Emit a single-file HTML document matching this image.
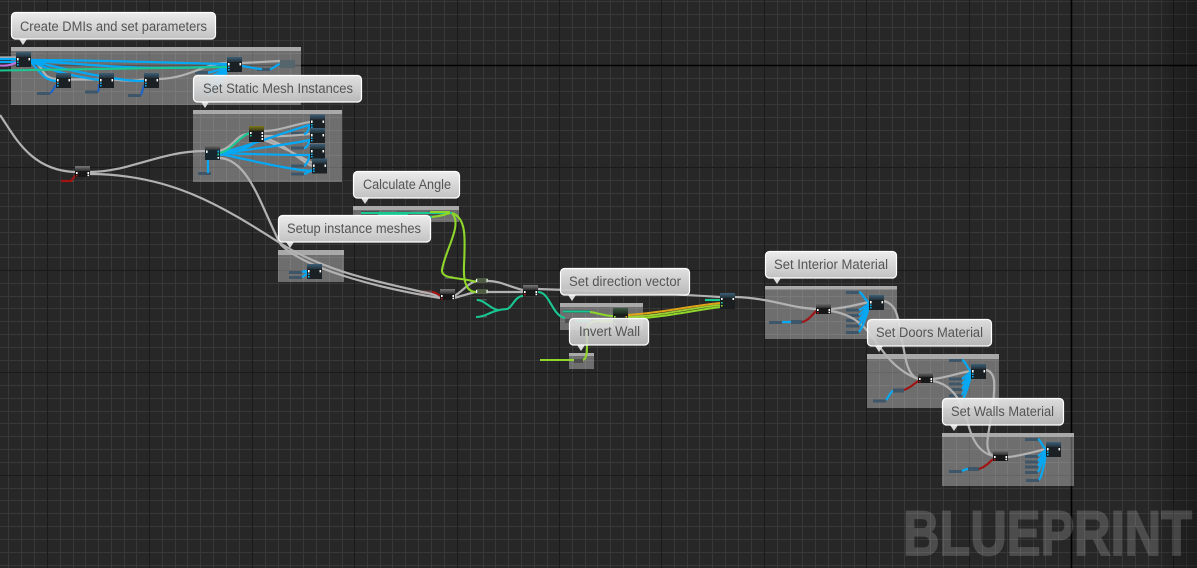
<!DOCTYPE html>
<html><head><meta charset="utf-8"><style>
html,body{margin:0;padding:0;background:#272727;overflow:hidden}
svg{display:block;width:1197px;height:568px}
text{font-family:"Liberation Sans",sans-serif}
.g{fill:#fff;fill-opacity:.33}.t{fill:#a9a9a9}
.wh{stroke:#b2b2b2;stroke-width:2.2;fill:none}
.bl{stroke:#06a8f4;stroke-width:2.2;fill:none}
.db{stroke:#1e63c8;stroke-width:2.1;fill:none}
.te{stroke:#19c792;stroke-width:2.1;fill:none}
.gr{stroke:#8fd62a;stroke-width:2.1;fill:none}
.re{stroke:#a01414;stroke-width:2.2;fill:none}
.v{fill:#3f5668}
.b{fill:url(#bub);stroke:#fff;stroke-width:1.2}
.tl{fill:#dcdcdc}
.c{fill:#545454;font-size:13.5px}
</style></head><body>
<svg xmlns="http://www.w3.org/2000/svg" width="1197" height="568" viewBox="0 0 1197 568">
<defs>
<linearGradient id="bub" x1="0" y1="0" x2="0" y2="1"><stop offset="0" stop-color="#ececec"/><stop offset="1" stop-color="#c2c2c2"/></linearGradient>
<linearGradient id="hb" x1="0" y1="0" x2="0" y2="1"><stop offset="0" stop-color="#3d6078"/><stop offset="1" stop-color="#223038"/></linearGradient>
<linearGradient id="hg" x1="0" y1="0" x2="0" y2="1"><stop offset="0" stop-color="#7a7a7a"/><stop offset="1" stop-color="#2e2e2e"/></linearGradient>
<linearGradient id="hy" x1="0" y1="0" x2="0" y2="1"><stop offset="0" stop-color="#7d7a1c"/><stop offset="1" stop-color="#34341a"/></linearGradient>
<linearGradient id="hd" x1="0" y1="0" x2="0" y2="1"><stop offset="0" stop-color="#3d5a42"/><stop offset="1" stop-color="#1f2a20"/></linearGradient>
<linearGradient id="vig" x1="0" y1="0" x2="1" y2="0"><stop offset="0" stop-color="#000" stop-opacity="0"/><stop offset="1" stop-color="#000" stop-opacity=".3"/></linearGradient>
<g id="nb"><rect width="15" height="15" fill="#1a2023"/><rect width="15" height="5" fill="url(#hb)"/><rect x="1" y="6" width="1.600" height="2.400" fill="#fff"/><rect x="12.500" y="6" width="1.600" height="2.400" fill="#fff"/><rect x="1" y="9.500" width="1.600" height="1.500" fill="#10b0f0"/><rect x="1" y="12" width="1.600" height="1.500" fill="#10b0f0"/></g>
<g id="ng"><rect width="15" height="11" fill="#181818"/><rect width="15" height="5" fill="url(#hg)"/><rect x="1" y="6" width="1.600" height="2" fill="#fff"/><rect x="12.500" y="6" width="1.600" height="2" fill="#fff"/><rect x="12.500" y="8.600" width="1.600" height="1.600" fill="#fff"/><rect x="1" y="9" width="1.600" height="1.400" fill="#b01818"/></g>
<g id="nt"><rect width="15" height="15" fill="#17262e"/><rect width="15" height="5" fill="url(#hg)"/><rect x="1" y="5.500" width="1.600" height="2.400" fill="#fff"/><rect x="12.500" y="5.500" width="1.600" height="2" fill="#10b0f0"/><rect x="12.500" y="8.500" width="1.600" height="2" fill="#20d0a0"/><rect x="12.500" y="12" width="1.600" height="1.600" fill="#fff"/></g>
</defs>
<rect width="1197" height="568" fill="#272727"/>
<path stroke="#383838" stroke-width="1" fill="none" d="M8.500 0V568M21.500 0V568M34.500 0V568M60.500 0V568M73.500 0V568M85.500 0V568M98.500 0V568M111.500 0V568M124.500 0V568M136.500 0V568M162.500 0V568M175.500 0V568M187.500 0V568M200.500 0V568M213.500 0V568M226.500 0V568M239.500 0V568M265.500 0V568M278.500 0V568M290.500 0V568M303.500 0V568M316.500 0V568M329.500 0V568M342.500 0V568M367.500 0V568M380.500 0V568M392.500 0V568M405.500 0V568M418.500 0V568M431.500 0V568M444.500 0V568M470.500 0V568M483.500 0V568M495.500 0V568M508.500 0V568M521.500 0V568M534.500 0V568M547.500 0V568M572.500 0V568M585.500 0V568M597.500 0V568M610.500 0V568M623.500 0V568M636.500 0V568M649.500 0V568M674.500 0V568M687.500 0V568M699.500 0V568M712.500 0V568M725.500 0V568M738.500 0V568M751.500 0V568M777.500 0V568M790.500 0V568M802.500 0V568M815.500 0V568M828.500 0V568M841.500 0V568M854.500 0V568M879.500 0V568M892.500 0V568M904.500 0V568M917.500 0V568M930.500 0V568M943.500 0V568M956.500 0V568M982.500 0V568M995.500 0V568M1007.500 0V568M1020.500 0V568M1033.500 0V568M1045.500 0V568M1058.500 0V568M1084.500 0V568M1097.500 0V568M1109.500 0V568M1122.500 0V568M1135.500 0V568M1148.500 0V568M1161.500 0V568M1186.500 0V568M0 1.500H1197M0 14.500H1197M0 27.500H1197M0 40.500H1197M0 53.500H1197M0 78.500H1197M0 91.500H1197M0 104.500H1197M0 117.500H1197M0 130.500H1197M0 142.500H1197M0 155.500H1197M0 180.500H1197M0 193.500H1197M0 206.500H1197M0 219.500H1197M0 232.500H1197M0 244.500H1197M0 257.500H1197M0 283.500H1197M0 296.500H1197M0 308.500H1197M0 321.500H1197M0 334.500H1197M0 347.500H1197M0 360.500H1197M0 385.500H1197M0 398.500H1197M0 411.500H1197M0 423.500H1197M0 436.500H1197M0 449.500H1197M0 462.500H1197M0 488.500H1197M0 500.500H1197M0 513.500H1197M0 526.500H1197M0 539.500H1197M0 552.500H1197M0 565.500H1197"/>
<path stroke="#1a1a1a" stroke-width="1" fill="none" d="M47.500 0V568M149.500 0V568M252.500 0V568M354.500 0V568M457.500 0V568M559.500 0V568M661.500 0V568M764.500 0V568M866.500 0V568M969.500 0V568M1173.500 0V568M0 167.500H1197M0 270.500H1197M0 372.500H1197M0 475.500H1197"/>
<path stroke="#000" stroke-width="1.600" fill="none" d="M1071.500 0V568M0 65.500H1197"/>
<rect x="1150" width="47" height="568" fill="url(#vig)"/>
<text x="903" y="555" font-size="63" font-weight="700" fill="#fff" stroke="#fff" stroke-width="1.800" opacity=".17" textLength="289" lengthAdjust="spacingAndGlyphs">BLUEPRINT</text>

<!-- comment regions -->
<rect class="g" x="11" y="47" width="290" height="58"/><rect class="t" x="11" y="47" width="290" height="4"/>
<rect class="g" x="193" y="110" width="149" height="72"/><rect class="t" x="193" y="110" width="149" height="4"/>
<rect class="g" x="353" y="206" width="106" height="16"/><rect class="t" x="353" y="206" width="106" height="4"/>
<rect class="g" x="278" y="250" width="66" height="32"/><rect class="t" x="278" y="250" width="66" height="5"/>
<rect class="g" x="560" y="303" width="83" height="27"/><rect class="t" x="560" y="303" width="83" height="4"/>
<rect class="g" x="569" y="353" width="25" height="16"/><rect class="t" x="569" y="353" width="25" height="3"/>
<rect class="g" x="765" y="286" width="132" height="53"/><rect class="t" x="765" y="286" width="132" height="3.500"/>
<rect class="g" x="867" y="354" width="132" height="54"/><rect class="t" x="867" y="354" width="132" height="5"/>
<rect class="g" x="942" y="433" width="132" height="53"/><rect class="t" x="942" y="433" width="132" height="4"/>

<!-- variable stubs -->
<g class="v">
<rect x="37" y="92" width="13" height="3"/><rect x="85" y="90.500" width="13" height="3"/><rect x="128" y="94" width="13" height="3"/>
<rect x="195" y="71" width="13" height="3"/><rect x="195" y="76.500" width="13" height="3"/><rect x="195" y="81" width="13" height="3"/><rect x="195" y="86.500" width="13" height="3"/><rect x="195" y="91" width="13" height="3"/><rect x="195" y="94.500" width="13" height="3"/>
<rect x="257" y="68" width="13" height="3"/>
<rect x="198" y="172" width="13" height="3"/><rect x="291" y="132" width="13" height="3"/><rect x="291" y="146.500" width="13" height="3"/><rect x="291" y="164.500" width="13" height="3"/><rect x="291" y="172.500" width="13" height="3"/>
<rect x="289" y="271" width="13" height="3"/><rect x="289" y="276" width="13" height="3"/>
<rect x="846" y="291" width="13" height="3"/><rect x="846" y="308.500" width="13" height="3"/><rect x="846" y="314" width="13" height="3"/><rect x="846" y="319" width="13" height="3"/><rect x="846" y="324.500" width="13" height="3"/><rect x="846" y="331" width="13" height="3"/>
<rect x="769" y="321" width="13" height="3"/><rect x="791" y="320" width="11" height="4"/>
<rect x="949" y="359" width="13" height="3"/><rect x="949" y="377.500" width="13" height="3"/><rect x="949" y="382.500" width="13" height="3"/><rect x="949" y="388" width="13" height="3"/><rect x="949" y="394" width="13" height="3"/><rect x="949" y="399.500" width="13" height="3"/>
<rect x="873" y="399.500" width="13" height="3"/><rect x="893" y="388.500" width="11" height="4"/>
<rect x="1025" y="438" width="13" height="3"/><rect x="1025" y="455" width="13" height="3"/><rect x="1025" y="460.500" width="13" height="3"/><rect x="1025" y="465.500" width="13" height="3"/><rect x="1025" y="471" width="13" height="3"/><rect x="1026" y="479" width="13" height="3"/>
<rect x="949" y="470" width="13" height="3"/><rect x="968" y="467" width="11" height="4"/>
</g>
<g fill="#4e4e4e">
<rect x="361" y="211" width="18" height="4"/><rect x="378" y="212.500" width="13" height="4"/><rect x="397" y="211.500" width="14" height="4"/><rect x="411" y="214.500" width="18" height="4"/><rect x="428" y="211.500" width="20" height="4"/>
<rect x="420" y="290.500" width="12" height="3.500" fill="#6b4040"/><rect x="445" y="276" width="8" height="3"/>
<rect x="476" y="299" width="11" height="1.500"/><rect x="476" y="316" width="11" height="1.500"/>
<rect x="563" y="310" width="27" height="3"/><rect x="565" y="319" width="10" height="4"/><rect x="590" y="320" width="10" height="4"/>
<rect x="540" y="359.500" width="30" height="1"/><rect x="574" y="359" width="9" height="4"/>
<rect x="61" y="180.500" width="13" height="1.500"/>
<rect x="280" y="60" width="15" height="8" fill="#56646c"/>
</g>

<!-- wires -->
<path class="wh" d="M0 115C14 135 30 171 76 172M89 172C130 172 160 151 205 151M89 174C170 174 220 205 280 243C330 275 395 285 440 296M220 158C250 160 262 210 281 245C310 272 390 290 440 298M0 57.500H16M31 61C45 65 40 78 56 79M71 79.500H99M114 79.500C125 81 135 81 144 79.500M159 79C190 78 205 63 227 63M242 63L280 61M454 296C462 292 468 283 476 281M454 298C462 296 470 293 476 292M488 281C500 281 510 287 523 290M488 292H523M538 289C600 291 660 293 720 297M735 297C770 298 790 308 816 309M831 309C845 308 855 305 869 302M884 301C900 305 898 325 903 345C906 362 908 375 918 379M831 311C862 316 870 335 882 350C892 364 905 374 918 379M933 379C945 378 958 373 971 371M986 370C996 372 995 385 993 405C990 430 982 450 993 456M933 381C950 384 960 397 967 420C973 445 982 453 993 456M1008 457C1020 456 1033 452 1046 449M220 151C235 146 236 134 249 134M264 131C280 131 295 124 310 122M264 136C285 137 298 135 310 134M264 138C285 143 298 160 312 166M264 140C280 146 298 155 312 163"/>
<path class="bl" d="M0 59H16M0 62H16M31 60C100 60 170 63 227 64M31 61C70 62 130 72 227 66M31 61C50 72 85 78 99 80M31 62C42 75 45 80 56 81M31 61C60 68 120 82 144 81M208 72.500C215 72 222 68 227 66M208 78C215 76 222 70 227 67M208 82.500C215 80 223 72 227 68M208 88C216 84 223 74 227 69M208 92.500C217 88 224 75 227 70M208 96C218 90 225 77 227 71M242 66C250 67 256 69 262 69M270 69.500C273 68 277 65 280 64M208 173C208 170 208 164 208 160M220 153C250 146 290 130 310 125M220 153C250 150 290 144 310 140M220 153C250 154 290 155 310 155M220 154C250 160 290 170 312 171M304 134C308 134 309 127 310 126M304 148C308 148 309 141 310 140M304 166C308 164 309 157 310 155M304 174C307 173 310 171 312 170M255 142C250 148 235 152 220 155M302 272C304 271 306 271 307 271M302 277C305 276 306 274 307 274M859 292C863 293 864 300 869 302M859 310C863 308 866 306 869 303M859 315C863 312 866 308 869 304M859 320C863 316 866 310 869 305M859 325C863 320 866 312 869 306M859 332C864 325 867 314 869 307M782 322H791M962 360C966 361 967 369 971 371M962 379C965 377 968 373 971 372M962 384C965 381 968 376 971 373M962 389C965 385 968 378 971 374M962 395C965 390 968 380 971 375M962 401C966 395 969 383 971 376M886 400C889 397 890 392 893 391M1038 439C1041 440 1042 447 1046 449M1038 456C1041 454 1044 451 1046 450M1038 461C1041 458 1044 453 1046 451M1038 466C1041 462 1044 455 1046 452M1038 472C1041 467 1044 457 1046 453M1039 480C1043 474 1045 460 1046 454M962 471C964 470 966 469 968 469M304 272H307"/>
<path class="db" d="M50 93C53 92 54 87 56 85M98 92C99 90 99 87 99 84M141 95C142 93 143 88 144 85"/>
<path d="M0 65.500C6 66 12 65 16 62.500" stroke="#c070e0" stroke-width="2" fill="none"/>
<path class="te" d="M0 70.500L227 67M220 153C232 150 238 138 249 133M477 300C485 300 490 309 498 310M476 317C487 317 490 310 507 309C512 308 515 296 523 296M538 292C550 292 552 316 565 318M361 213H452M378 214.500H408M411 217H432M563 311.500H590M575 321H590"/>
<path class="gr" d="M452 213C463 225 445 250 442 270C441 280 462 277 476 282M452 213C467 218 465 240 464 265C463 285 468 292 476 292M430 212H450M432 217C440 216 445 215 450 213M590 312C598 313 605 316 613 316M600 322C605 322 608 321 613 321M583 360C590 358 585 335 588 326C590 320 600 321 613 321M540 360H574M628 319C660 318 690 311 720 307"/>
<path d="M628 315C660 313 690 306 720 303" stroke="#e0a418" stroke-width="2.100" fill="none"/>
<path d="M628 317C660 316 690 308 720 305" stroke="#9ccf30" stroke-width="1.800" fill="none"/>
<path class="te" d="M705 300H720"/>
<path class="re" d="M61 181H71L76 175M432 292C436 292 438 295 441 296M802 322C808 321 812 315 816 311M904 390C910 388 914 384 918 381M979 469C985 467 989 463 993 459"/>

<!-- small reroute nodes -->
<g><rect x="476" y="278" width="12" height="5" fill="#4f5c44"/><rect x="476" y="289" width="12" height="5" fill="#4f5c44"/><rect x="476" y="279" width="1.200" height="3" fill="#fff"/><rect x="486.500" y="279" width="1.200" height="3" fill="#fff"/><rect x="476" y="290" width="1.200" height="3" fill="#fff"/><rect x="486.500" y="290" width="1.200" height="3" fill="#fff"/></g>

<!-- nodes -->
<use href="#nb" x="16" y="52"/><use href="#nb" x="56" y="73"/><use href="#nb" x="99" y="73"/><use href="#nb" x="144" y="73"/><use href="#nb" x="227" y="57"/>
<use href="#ng" x="75" y="166"/>
<use href="#nt" x="205" y="145"/>
<g transform="translate(249 126)"><rect width="15" height="16" fill="#1b1e20"/><rect width="15" height="5" fill="url(#hy)"/><rect x="12.500" y="6" width="1.600" height="2" fill="#fff"/><rect x="12.500" y="9" width="1.600" height="2" fill="#fff"/><rect x="12.500" y="12" width="1.600" height="2" fill="#fff"/><rect x="1" y="6" width="1.600" height="2" fill="#fff"/><rect x="1" y="9" width="1.600" height="1.500" fill="#20d0a0"/></g>
<use href="#nb" x="310" y="114.500"/><use href="#nb" x="310" y="128"/><use href="#nb" x="310" y="144"/><use href="#nb" x="312" y="158.500"/>
<use href="#nb" x="307" y="264"/>
<use href="#ng" x="440" y="289"/><use href="#ng" x="523" y="285"/>
<g transform="translate(613 308)"><rect width="15" height="19" fill="#1a1f1b"/><rect width="15" height="6" fill="url(#hd)"/><rect x="1" y="8" width="1.600" height="1.600" fill="#a0e040"/><rect x="1" y="15" width="1.600" height="1.600" fill="#a0e040"/><rect x="12.500" y="8" width="1.600" height="1.600" fill="#e0b030"/></g>
<g transform="translate(720 293)"><rect width="15" height="16" fill="#1b1e20"/><rect width="15" height="5" fill="url(#hb)"/><rect x="1" y="5" width="1.600" height="2" fill="#fff"/><rect x="12.500" y="5" width="1.600" height="2" fill="#fff"/><rect x="1" y="9" width="1.600" height="1.500" fill="#20d0a0"/><rect x="1" y="12" width="1.600" height="1.500" fill="#a0e040"/></g>
<use href="#ng" x="816" y="303"/><use href="#nb" x="869" y="295"/>
<use href="#ng" x="918" y="372"/><use href="#nb" x="971" y="364"/>
<use href="#ng" x="993" y="450"/><use href="#nb" x="1046" y="442"/>

<!-- comment bubbles -->
<g>
<path class="tl" d="M19 39L23 45L27 39Z"/><rect class="b" x="11.500" y="12.500" width="204" height="26.500" rx="4"/><text class="c" x="20" y="31" textLength="187" lengthAdjust="spacingAndGlyphs">Create DMIs and set parameters</text>
<path class="tl" d="M201 102L205 108L209 102Z"/><rect class="b" x="193.500" y="75.500" width="168" height="26.500" rx="4" fill-opacity=".94"/><text class="c" x="203" y="93" textLength="150" lengthAdjust="spacingAndGlyphs">Set Static Mesh Instances</text>
<path class="tl" d="M361 198L365 204L369 198Z"/><rect class="b" x="353.500" y="171.500" width="106" height="26.500" rx="4"/><text class="c" x="363" y="189" textLength="88" lengthAdjust="spacingAndGlyphs">Calculate Angle</text>
<path class="tl" d="M286 242L290 248L294 242Z"/><rect class="b" x="278.500" y="215.500" width="152" height="26.500" rx="4"/><text class="c" x="287" y="233" textLength="134" lengthAdjust="spacingAndGlyphs">Setup instance meshes</text>
<path class="tl" d="M568 295L572 301L576 295Z"/><rect class="b" x="560.500" y="268.500" width="129" height="26.500" rx="4" fill-opacity=".94"/><text class="c" x="569" y="286" textLength="112" lengthAdjust="spacingAndGlyphs">Set direction vector</text>
<path class="tl" d="M577 345L581 351L585 345Z"/><rect class="b" x="569.500" y="318.500" width="79" height="26.500" rx="4" fill-opacity=".9"/><text class="c" x="579" y="336" textLength="61" lengthAdjust="spacingAndGlyphs">Invert Wall</text>
<path class="tl" d="M773 278L777 284L781 278Z"/><rect class="b" x="765.500" y="251.500" width="131" height="26.500" rx="4"/><text class="c" x="774" y="269" textLength="114" lengthAdjust="spacingAndGlyphs">Set Interior Material</text>
<path class="tl" d="M875 346L879 352L883 346Z"/><rect class="b" x="867.500" y="319.500" width="124" height="26.500" rx="4" fill-opacity=".92"/><text class="c" x="876" y="337" textLength="107" lengthAdjust="spacingAndGlyphs">Set Doors Material</text>
<path class="tl" d="M950 425L954 431L958 425Z"/><rect class="b" x="942.500" y="398.500" width="121" height="26.500" rx="4" fill-opacity=".92"/><text class="c" x="951" y="416" textLength="103" lengthAdjust="spacingAndGlyphs">Set Walls Material</text>
</g>
</svg>
</body></html>
